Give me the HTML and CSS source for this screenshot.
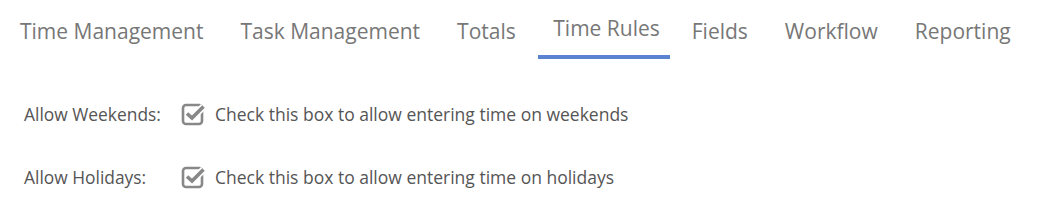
FILE: index.html
```html
<!DOCTYPE html>
<html lang="en">
<head>
  <meta charset="UTF-8">
  <title>Time Rules</title>
  <link rel="stylesheet" href="styles.css">
</head>
<body>

<div class="settings">
  <ul class="tabs">
    <li class="tab">Time Management</li>
    <li class="tab">Task Management</li>
    <li class="tab">Totals</li>
    <li class="tab active">Time Rules</li>
    <li class="tab">Fields</li>
    <li class="tab">Workflow</li>
    <li class="tab">Reporting</li>
  </ul>

  <div class="rules">
    <div class="rule">
      <span class="rule-label">Allow Weekends:</span>
      <svg class="check" viewBox="0 0 26 26" width="26" height="26">
        <rect x="2" y="4" width="19" height="19" rx="3" fill="none" stroke="#888" stroke-width="2.6"/>
        <path d="M6 12.5 L11 17 L22.5 5.5" fill="none" stroke="#fff" stroke-width="7"/>
        <path d="M6 12.5 L11 17 L22.5 5.5" fill="none" stroke="#888" stroke-width="3.6"/>
      </svg>
      <span class="rule-text">Check this box to allow entering time on weekends</span>
    </div>
    <div class="rule">
      <span class="rule-label">Allow Holidays:</span>
      <svg class="check" viewBox="0 0 26 26" width="26" height="26">
        <rect x="2" y="4" width="19" height="19" rx="3" fill="none" stroke="#888" stroke-width="2.6"/>
        <path d="M6 12.5 L11 17 L22.5 5.5" fill="none" stroke="#fff" stroke-width="7"/>
        <path d="M6 12.5 L11 17 L22.5 5.5" fill="none" stroke="#888" stroke-width="3.6"/>
      </svg>
      <span class="rule-text">Check this box to allow entering time on holidays</span>
    </div>
  </div>
</div>

</body>
</html>
```

FILE: styles.css
```css
body {
  margin: 0;
  background: #fff;
  font-family: 'Open Sans', Arial, sans-serif;
}
.settings {
  padding: 0 0 0 1.5px;
}
.tabs {
  list-style: none;
  margin: 0;
  padding: 0;
  display: flex;
}
.tab {
  font-size: 21px;
  color: #777;
  padding: 17px 18.5px 10px;
  border-bottom: 4px solid transparent;
}
.tab.active {
  margin: 0 3px 0 4px;
  padding: 14px 10.5px 13px 15px;
  border-bottom-color: #5b82d0;
}
.rules {
  padding: 40px 0 0 22.5px;
}
.rule {
  display: flex;
  align-items: center;
  height: 30px;
  margin-bottom: 33px;
}
.rule:last-child {
  margin-bottom: 0;
}
.rule-label {
  width: 157px;
  font-size: 17.4px;
  color: #555;
}
.check {
  margin-right: 8px;
}
.rule-text {
  font-size: 17.5px;
  color: #555;
}
```
